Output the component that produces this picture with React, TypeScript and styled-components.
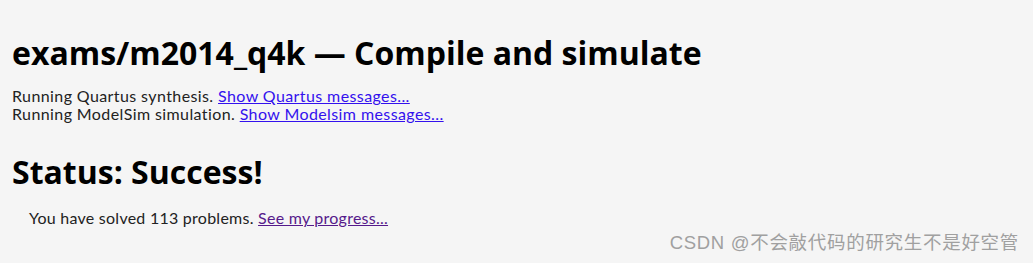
import React from 'react';
import styled, { createGlobalStyle } from 'styled-components';

const GlobalStyle = createGlobalStyle`
  html, body {
    margin: 0;
    padding: 0;
    background: #f5f5f5;
  }
  body {
    font-family: Lato, "Open Sans", sans-serif;
    color: #222;
  }
`;

const Page = styled.div`
  position: relative;
  min-height: 263px;
  padding: 1px 12px 0 12px;
  box-sizing: border-box;
`;

const Title = styled.h1`
  font-family: "Open Sans", sans-serif;
  font-weight: 700;
  font-size: 32px;
  line-height: 38px;
  margin: 33px 0 15px 0;
  color: #000;
`;

const Log = styled.div`
  font-size: 16px;
  line-height: 18px;
  letter-spacing: 0.4px;
`;

const Line = styled.div``;

const Link = styled.a<{ $visited?: boolean }>`
  color: ${(p) => (p.$visited ? '#551a8b' : '#3311ee')};
  text-decoration: underline;
  cursor: pointer;
`;

const Status = styled.h2`
  font-family: "Open Sans", sans-serif;
  font-weight: 700;
  font-size: 32px;
  line-height: 38px;
  margin: 30px 0 17px 0;
  color: #000;
`;

const Quote = styled.p`
  margin: 0 0 0 17px;
  font-size: 16px;
  line-height: 20px;
  letter-spacing: 0.25px;
`;

const Watermark = styled.div`
  position: absolute;
  right: 14px;
  bottom: 9px;
  font-family: "Liberation Sans", "Noto Sans CJK SC", sans-serif;
  font-size: 18.5px;
  letter-spacing: 0.7px;
  color: #a0a0a0;
`;

export default function App() {
  return (
    <Page>
      <GlobalStyle />
      <Title>exams/m2014_q4k — Compile and simulate</Title>
      <Log>
        <Line>
          Running Quartus synthesis. <Link>Show Quartus messages...</Link>
        </Line>
        <Line>
          Running ModelSim simulation. <Link>Show Modelsim messages...</Link>
        </Line>
      </Log>
      <Status>Status: Success!</Status>
      <Quote>
        You have solved 113 problems. <Link $visited>See my progress...</Link>
      </Quote>
      <Watermark>CSDN @不会敲代码的研究生不是好空管</Watermark>
    </Page>
  );
}
